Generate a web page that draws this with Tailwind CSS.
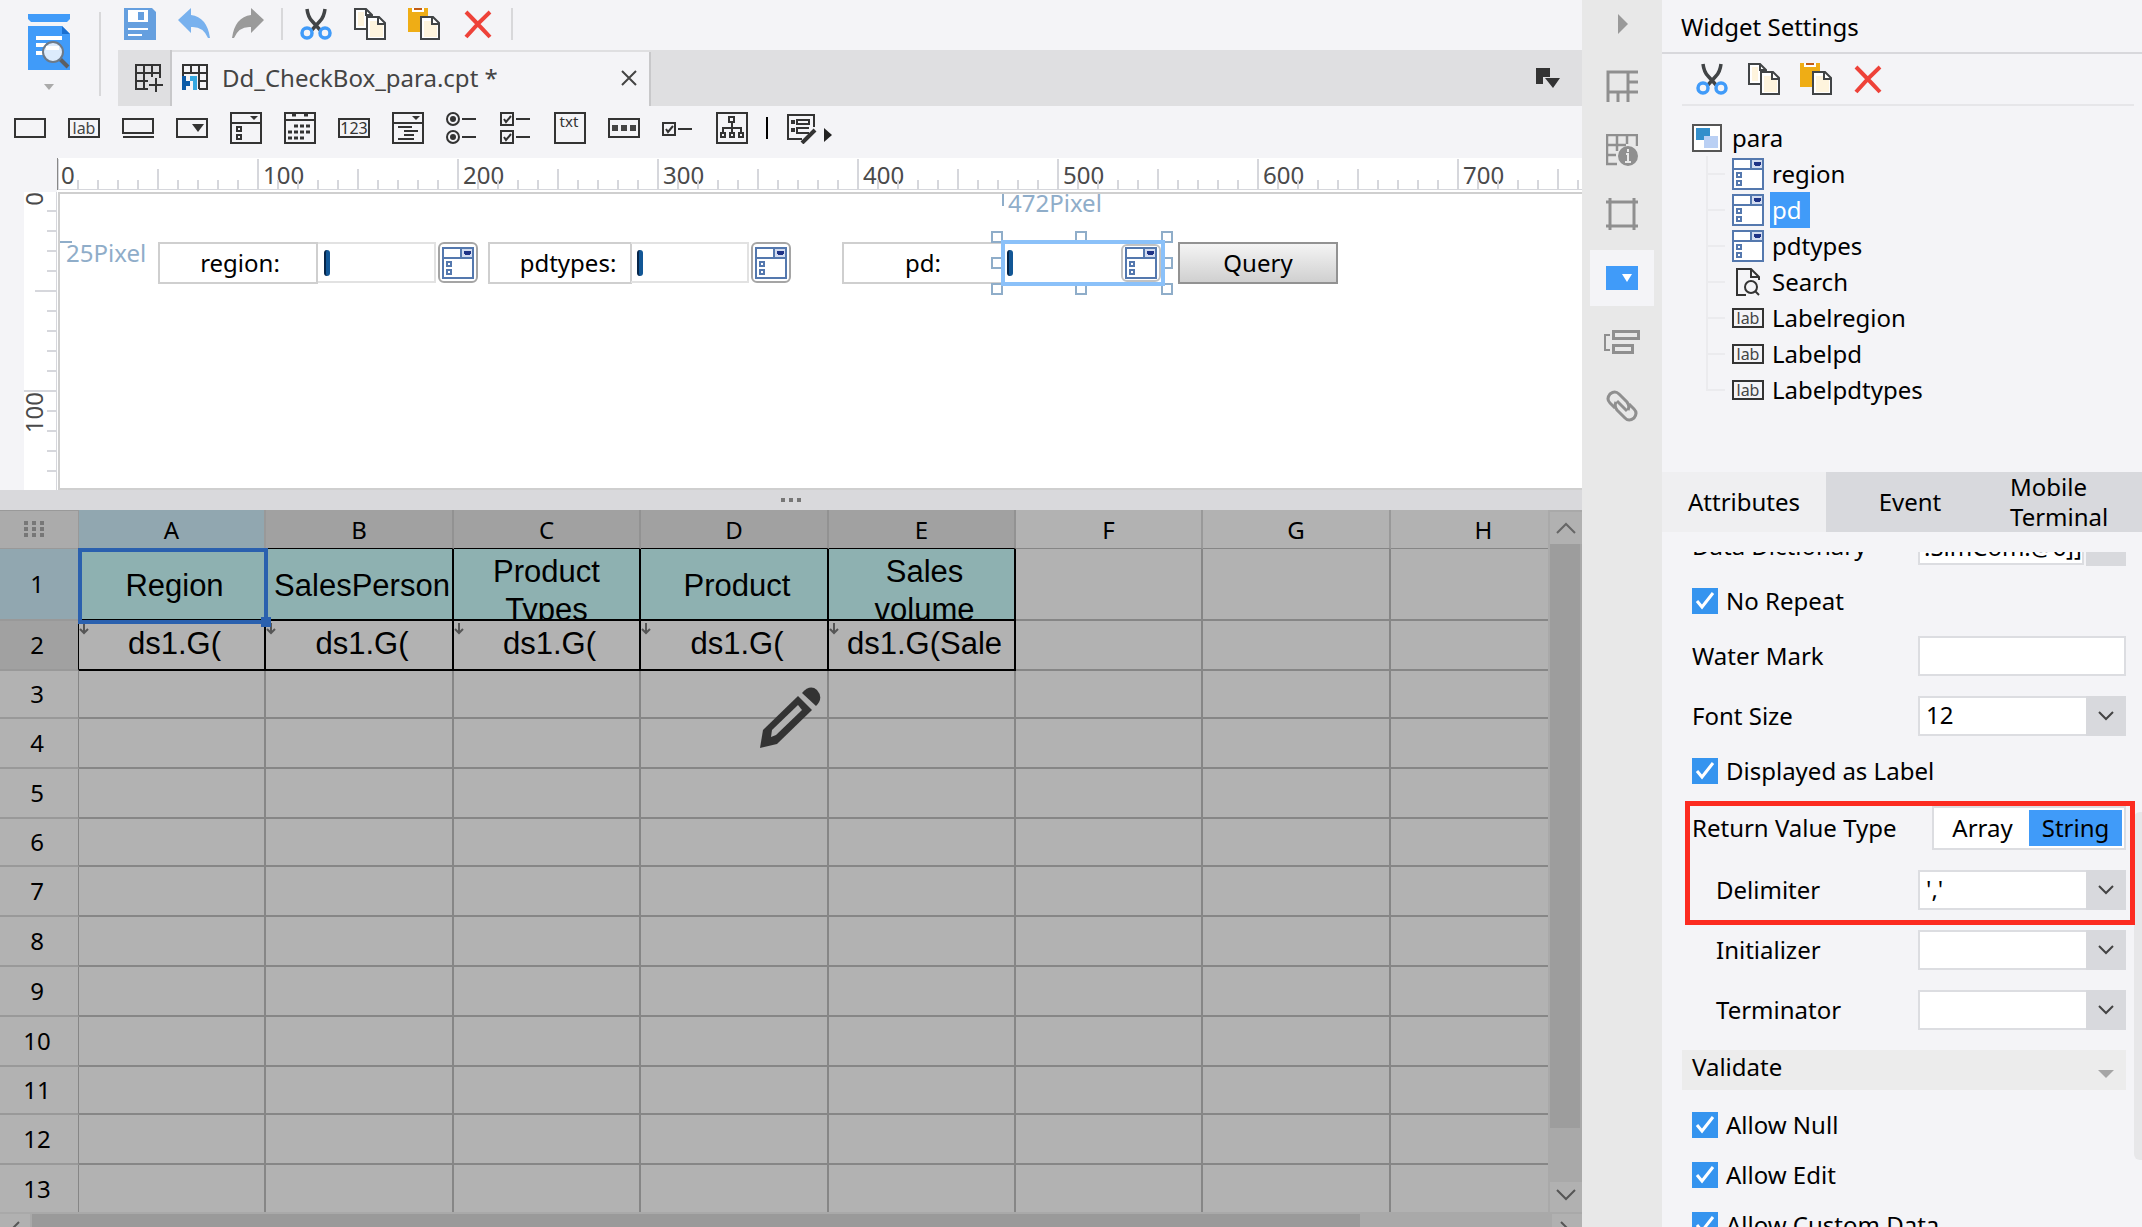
<!DOCTYPE html>
<html lang="en">
<head>
  <meta charset="UTF-8" />
  <meta name="viewport" content="width=device-width, initial-scale=1.0" />
  <title>Dd_CheckBox_para.cpt - Report Designer</title>
  <script src="https://cdn.jsdelivr.net/npm/@tailwindcss/browser@4"></script>
</head>
<body class="flex h-screen overflow-hidden bg-[#f4f4f7] text-black text-[24px] leading-[30px] font-['Noto_Sans','Open_Sans',sans-serif]">

  <!-- Shared icons -->
  <svg class="hidden">
    <symbol id="i-cut" viewBox="0 0 32 32">
      <path d="M7 1q1 8 5 12l9 10M25 1q-1 8-5 12l-9 10" fill="none" stroke="#414446" stroke-width="3.5" />
      <circle cx="7" cy="25" r="5" fill="none" stroke="#409bf9" stroke-width="3.5" />
      <circle cx="25" cy="25" r="5" fill="none" stroke="#409bf9" stroke-width="3.5" />
    </symbol>
    <symbol id="i-copy" viewBox="0 0 32 32">
      <path d="M1 1h11l6 6v14H1z" fill="#fff" stroke="#414446" stroke-width="2" />
      <path d="M4 4h6v14H4z" fill="#fef4dd" />
      <path d="M12 1v6h6" fill="none" stroke="#414446" stroke-width="2" />
      <path d="M13 9h12l6 6v16H13z" fill="#fff" stroke="#414446" stroke-width="2" />
      <path d="M16 13h8v4h5v12H16z" fill="#fef4dd" />
      <path d="M24 9v7h7" fill="none" stroke="#414446" stroke-width="2" />
    </symbol>
    <symbol id="i-paste" viewBox="0 0 32 32">
      <path d="M0 0h20v24H0z" fill="#efad15" />
      <path d="M4 0h12v4H4z" fill="#fff" />
      <path d="M6 0h8v2H6z" fill="#c15b14" />
      <path d="M13 9h12l6 6v16H13z" fill="#fff" stroke="#414446" stroke-width="2" />
      <path d="M16 13h8v4h5v12H16z" fill="#fef4dd" />
      <path d="M24 9v7h7" fill="none" stroke="#414446" stroke-width="2" />
    </symbol>
    <symbol id="i-delete" viewBox="0 0 32 32">
      <path d="M4 4q8 8 24 25M28 4Q16 15 4 29" fill="none" stroke="#ee4239" stroke-width="4" />
    </symbol>
    <symbol id="i-combo" viewBox="0 0 32 32">
      <path d="M1 1h30v30H1z" fill="#fff" stroke="#5478ae" stroke-width="2" />
      <path d="M1 11h30M19 1v10" stroke="#5478ae" stroke-width="2" />
      <path d="M20 2h10v8H20z" fill="#d3dcf0" />
      <path d="M22 4h7v3h-1v1h-5V7h-1z" fill="#1f3386" />
      <path d="M5 15h4v4H5zM5 23h4v4H5z" fill="none" stroke="#5478ae" stroke-width="2" />
    </symbol>
    <symbol id="i-label" viewBox="0 0 32 20">
      <path d="M1 1h30v18H1z" fill="none" stroke="#333" stroke-width="2" />
      <text x="16" y="16" text-anchor="middle" font-family="Noto Sans, sans-serif" font-size="16" fill="#444">lab</text>
    </symbol>
  </svg>

  <!-- Designer -->
  <main class="flex flex-col flex-1 min-w-0">

    <header class="flex h-[106px] shrink-0">
      <!-- Preview button -->
      <div class="flex w-[118px] shrink-0">
        <button type="button" aria-label="Preview" class="flex flex-col items-center w-[72px] ml-[13px] pt-3.5">
          <svg class="w-[42px] h-14" viewBox="0 0 42 56">
            <path d="M0 0h42v5l-3 3H3L0 5z" fill="#409bf9" />
            <path d="M0 12h34l8 8v36H0z" fill="#409bf9" />
            <path d="M34 12l8 8h-8z" fill="#1a6fd0" />
            <path d="M8 24h26M8 31h10M8 39h10" stroke="#fff" stroke-width="4" />
            <path d="M32 45l8 8" stroke="#5c5f63" stroke-width="4" />
            <circle cx="25" cy="38" r="10" fill="#dcebfc" stroke="#6d7a88" stroke-width="2" />
            <path d="M18 34h13" stroke="#fff" stroke-width="4" />
          </svg>
          <svg class="w-2.5 h-1.5 mt-3.5" viewBox="0 0 10 6"><path d="M0 0h10L5 6z" fill="#aaa" /></svg>
        </button>
        <div class="w-0.5 h-[84px] mt-3 ml-3.5 bg-[#d8d8da]"></div>
      </div>

      <div class="flex flex-col flex-1 min-w-0">
        <!-- Edit toolbar -->
        <div class="flex items-center h-[50px] pl-1.5 pb-0.5">
          <div class="flex gap-[22px]">
            <button type="button" aria-label="Save"><svg class="w-8 h-8" viewBox="0 0 32 32">
              <path d="M0 0h28l4 4v28H0z" fill="#659fdf" />
              <path d="M4 2h20v12H4z" fill="#fff" />
              <path d="M14 4h6v8h-6z" fill="#659fdf" />
              <path d="M4 21h20M4 27h14" stroke="#fff" stroke-width="2" />
            </svg></button>
            <button type="button" aria-label="Undo"><svg class="w-8 h-8" viewBox="0 0 32 32"><path d="M0 12L13 0v7q16 2 19 23h-2q-5-12-17-11v6z" fill="#78b1ee" /></svg></button>
            <button type="button" aria-label="Redo"><svg class="w-8 h-8" viewBox="0 0 32 32"><path d="M32 12L19 0v7Q3 9 0 30h2q5-12 17-11v6z" fill="#9a9a9a" /></svg></button>
          </div>
          <div class="w-0.5 h-8 mx-[17px] bg-[#d8d8da]"></div>
          <div class="flex gap-[22px]">
            <button type="button" aria-label="Cut"><svg class="w-8 h-8"><use href="#i-cut" /></svg></button>
            <button type="button" aria-label="Copy"><svg class="w-8 h-8"><use href="#i-copy" /></svg></button>
            <button type="button" aria-label="Paste"><svg class="w-8 h-8"><use href="#i-paste" /></svg></button>
            <button type="button" aria-label="Delete"><svg class="w-8 h-8"><use href="#i-delete" /></svg></button>
          </div>
          <div class="w-0.5 h-8 mx-[17px] bg-[#d8d8da]"></div>
        </div>

        <!-- File tabs -->
        <div class="flex h-14 bg-[#dfdfe1]">
          <button type="button" aria-label="New template" class="flex items-center justify-center w-[54px] pl-2.5 border-r-2 border-[#c8c8ca]">
            <svg class="w-7 h-7" viewBox="0 0 28 28" fill="none" stroke="#333" stroke-width="2">
              <path d="M13 25H1V1h24v13M1 9h24M1 17h12M9 1v24M17 1v12M14 21h14M21 14v14" />
            </svg>
          </button>
          <div class="flex items-center w-[479px] pl-2.5 pr-2 pb-0.5 mt-0.5 bg-[#f4f4f7] border-r-2 border-[#c8c8ca]">
            <svg class="w-7 h-7" viewBox="0 0 28 28">
              <path d="M1 12V1h24v24h-8M1 9h24M9 1v8M17 1v24M17 17h8" fill="none" stroke="#333" stroke-width="2" />
              <path d="M0 12h4v5h4v5H4v4H0z" fill="#0a5aa8" />
              <path d="M8 12h7v14h-4v-9H8z" fill="#35a8e0" />
            </svg>
            <span class="flex-1 ml-3 whitespace-nowrap text-[#444]">Dd_CheckBox_para.cpt *</span>
            <button type="button" aria-label="Close tab" class="p-1"><svg class="w-4 h-4" viewBox="0 0 16 16"><path d="M1 1l14 14M15 1L1 15" stroke="#444" stroke-width="2" /></svg></button>
          </div>
          <button type="button" aria-label="Tab list" class="ml-auto mr-[22px]">
            <svg class="w-6 h-5" viewBox="0 0 24 20" fill="#333"><path d="M0 0h14v9H7v7H0zM9 10h15l-7 10z" /></svg>
          </button>
        </div>
      </div>
    </header>

    <!-- Widget toolbar -->
    <div class="flex items-center gap-[22px] h-[52px] shrink-0 pl-3.5 pb-2">
      <button type="button" aria-label="Text"><svg class="w-8 h-8" viewBox="0 0 32 32" fill="none" stroke="#333" stroke-width="2"><path d="M1 7h30v18H1z" /></svg></button>
      <button type="button" aria-label="Label" class="h-8"><svg class="w-8 h-5"><use href="#i-label" /></svg></button>
      <button type="button" aria-label="Button"><svg class="w-8 h-8" viewBox="0 0 32 32" fill="none" stroke="#333" stroke-width="2"><path d="M1 7h30v14H1zM1 25h31" /></svg></button>
      <button type="button" aria-label="Drop-down box"><svg class="w-8 h-8" viewBox="0 0 32 32"><path d="M1 7h30v18H1z" fill="none" stroke="#333" stroke-width="2" /><path d="M16 12h12l-6 8z" fill="#333" /></svg></button>
      <button type="button" aria-label="Drop-down checkbox"><svg class="w-8 h-8" viewBox="0 0 32 32"><path d="M1 1h30v30H1zM1 11h30M7 15h4v4H7zM7 23h4v4H7z" fill="none" stroke="#333" stroke-width="2" /><path d="M20 4h8l-4 4z" fill="#333" /></svg></button>
      <button type="button" aria-label="Date"><svg class="w-8 h-8" viewBox="0 0 32 32"><path d="M1 1h30v30H1zM1 8h30" fill="none" stroke="#333" stroke-width="2" /><path d="M8 3h4M20 3h4" stroke="#333" stroke-width="3" /><path d="M10 14h17M4 20h23M4 26h17" fill="none" stroke="#333" stroke-width="3" stroke-dasharray="4 2" /></svg></button>
      <button type="button" aria-label="Number"><svg class="w-8 h-8" viewBox="0 0 32 32"><path d="M1 7h30v18H1z" fill="none" stroke="#333" stroke-width="2" /><text x="16" y="22" text-anchor="middle" font-family="Noto Sans, sans-serif" font-size="16" fill="#333">123</text></svg></button>
      <button type="button" aria-label="Drop-down tree"><svg class="w-8 h-8" viewBox="0 0 32 32"><path d="M1 1h30v30H1zM1 11h30M6 15h14M12 19h14M12 23h10M6 27h16" fill="none" stroke="#333" stroke-width="2" /><path d="M20 4h8l-4 4z" fill="#333" /></svg></button>
      <button type="button" aria-label="Radio group"><svg class="w-8 h-8" viewBox="0 0 32 32"><g fill="none" stroke="#333" stroke-width="2"><circle cx="7" cy="7" r="6" /><circle cx="7" cy="25" r="6" /><path d="M16 7h14M16 25h14" /></g><circle cx="7" cy="7" r="3" fill="#333" /><circle cx="7" cy="25" r="3" fill="#333" /></svg></button>
      <button type="button" aria-label="Checkbox group"><svg class="w-8 h-8" viewBox="0 0 32 32" fill="none" stroke="#333" stroke-width="2"><path d="M1 1h12v12H1zM1 19h12v12H1zM16 7h14M16 25h14M4 7l2 3 5-6M4 25l2 3 5-6" /></svg></button>
      <button type="button" aria-label="Text area"><svg class="w-8 h-8" viewBox="0 0 32 32"><path d="M1 1h30v30H1z" fill="none" stroke="#333" stroke-width="2" /><text x="15" y="15" text-anchor="middle" font-family="Noto Sans, sans-serif" font-size="15" fill="#333">txt</text></svg></button>
      <button type="button" aria-label="Password"><svg class="w-8 h-8" viewBox="0 0 32 32"><path d="M1 7h30v18H1z" fill="none" stroke="#333" stroke-width="2" /><path d="M4 16h24" stroke="#444" stroke-width="6" stroke-dasharray="6 3" /></svg></button>
      <button type="button" aria-label="Checkbox"><svg class="w-8 h-8" viewBox="0 0 32 32" fill="none" stroke="#333" stroke-width="2"><path d="M1 11h12v12H1zM16 17h14M4 17l2 3 5-6" /></svg></button>
      <button type="button" aria-label="View tree"><svg class="w-8 h-8" viewBox="0 0 32 32" fill="none" stroke="#333" stroke-width="2"><path d="M1 1h30v30H1zM13 5h5v5h-5zM5 21h4v4H5zM14 21h4v4h-4zM23 21h4v4h-4zM16 10v11M7 21v-5h18v5" /></svg></button>
      <div class="w-0.5 h-[22px] -mx-1 bg-black"></div>
      <button type="button" aria-label="Custom widgets" class="flex items-center gap-1.5">
        <svg class="w-8 h-8" viewBox="0 0 32 32" fill="none" stroke="#333" stroke-width="2"><path d="M28 15V3H2v24h14M11 8h12v4H11zM23 16H11v5h12" /><path d="M5 10h4M5 18h4" stroke-width="4" /><path d="M29 18L16 31" stroke-width="4" /></svg>
        <svg class="w-2 h-3.5 mt-3.5" viewBox="0 0 8 14"><path d="M0 0l8 7-8 7z" fill="#222" /></svg>
      </button>
    </div>

    <!-- Parameter pane -->
    <section class="flex flex-col h-[332px] shrink-0">
      <!-- Horizontal ruler -->
      <div class="relative flex h-[34px] leading-[34px] shrink-0 ml-[57px] bg-white overflow-hidden text-[#4a4a4a]">
        <span class="w-[200px] shrink-0 pl-1">0</span>
        <span class="w-[200px] shrink-0 pl-1.5">100</span>
        <span class="w-[200px] shrink-0 pl-1.5">200</span>
        <span class="w-[200px] shrink-0 pl-1.5">300</span>
        <span class="w-[200px] shrink-0 pl-1.5">400</span>
        <span class="w-[200px] shrink-0 pl-1.5">500</span>
        <span class="w-[200px] shrink-0 pl-1.5">600</span>
        <span class="flex-1 pl-1.5">700</span>
        <svg class="absolute inset-0 w-full h-full">
          <pattern id="h-minor" width="20" height="34" patternUnits="userSpaceOnUse"><path d="M0 22h2v10H0z" fill="#d6d7dc" /></pattern>
          <pattern id="h-major" width="200" height="34" patternUnits="userSpaceOnUse"><path d="M0 1h2v31H0zM100 11h2v21h-2z" fill="#d6d7dc" /></pattern>
          <rect width="100%" height="34" fill="url(#h-minor)" />
          <rect width="100%" height="34" fill="url(#h-major)" />
          <rect y="31" width="100%" height="1" fill="#d6d7dc" />
          <rect width="1" height="32" fill="#888" />
        </svg>
      </div>

      <div class="flex flex-1 min-h-0">
        <!-- Vertical ruler -->
        <div class="relative w-[34px] ml-6 shrink-0 bg-white text-[#4a4a4a]">
          <span class="absolute -left-0.5 top-0 w-6 leading-6 rotate-180 [writing-mode:vertical-rl]">0</span>
          <span class="absolute -left-0.5 top-[200px] w-6 leading-6 rotate-180 [writing-mode:vertical-rl]">100</span>
          <svg class="absolute inset-0 w-full h-full">
            <pattern id="v-minor" y="-2" width="34" height="20" patternUnits="userSpaceOnUse"><path d="M23 0h10v2H23z" fill="#d6d7dc" /></pattern>
            <pattern id="v-major" y="-2" width="34" height="200" patternUnits="userSpaceOnUse"><path d="M0 0h33v2H0zM11 100h22v2H11z" fill="#d6d7dc" /></pattern>
            <rect width="34" height="100%" fill="url(#v-minor)" />
            <rect width="34" height="100%" fill="url(#v-major)" />
            <rect x="32" width="1" height="100%" fill="#d6d7dc" />
          </svg>
        </div>

        <!-- Free-form widget canvas -->
        <div class="relative flex-1 bg-white border-2 border-r-0 border-[#cfcfcf] text-center">
          <span class="absolute left-0 top-[47px] w-3 h-0.5 bg-[#8fadc9]"></span>
          <span class="absolute left-1.5 top-11 text-[#8fadc9]">25Pixel</span>
          <span class="absolute left-[942px] top-0 w-0.5 h-3 bg-[#8fadc9]"></span>
          <span class="absolute left-[948px] -top-1.5 text-[#8fadc9]">472Pixel</span>

          <label for="w-region" class="absolute left-[98px] top-12 w-[160px] h-[42px] pl-1 leading-[38px] border-2 border-[#cfcfcf]">region:</label>
          <div class="absolute left-[258px] top-12 flex gap-0.5 h-[42px] pb-px">
            <input id="w-region" type="text" class="w-[118px] border-2 border-l-0 border-[#e2e2e2]" />
            <button type="button" aria-label="Choose region" class="flex items-center justify-center w-10 border-2 border-[#a5a5a5] rounded-md"><svg class="w-8 h-8"><use href="#i-combo" /></svg></button>
            <span class="absolute left-1.5 top-2 w-[6px] h-[26px] rounded-sm border-l-2 border-[#06264a] bg-[#125796]"></span>
          </div>

          <label for="w-pdtypes" class="absolute left-[428px] top-12 w-[144px] h-[42px] pl-4 leading-[38px] border-2 border-[#cfcfcf]">pdtypes:</label>
          <div class="absolute left-[571px] top-12 flex gap-0.5 h-[42px] pb-px">
            <input id="w-pdtypes" type="text" class="w-[118px] border-2 border-l-0 border-[#e2e2e2]" />
            <button type="button" aria-label="Choose pdtypes" class="flex items-center justify-center w-10 border-2 border-[#a5a5a5] rounded-md"><svg class="w-8 h-8"><use href="#i-combo" /></svg></button>
            <span class="absolute left-1.5 top-2 w-[6px] h-[26px] rounded-sm border-l-2 border-[#06264a] bg-[#125796]"></span>
          </div>

          <label for="w-pd" class="absolute left-[782px] top-12 w-[162px] h-[42px] leading-[38px] border-2 border-[#cfcfcf]">pd:</label>
          <!-- Selected widget with its resize handles -->
          <svg class="absolute left-[930px] top-[37px] w-[184px] h-16" viewBox="0 0 184 64" fill="#fff" stroke="#8fadc9" stroke-width="2">
            <path d="M2 1h10v10H2zM86 1h10v10H86zM172 1h10v10h-10zM2 27h10v10H2zM172 27h10v10h-10zM2 53h10v10H2zM86 53h10v10H86zM172 53h10v10h-10z" />
          </svg>
          <div class="absolute left-[941px] top-[46px] flex w-[164px] h-[46px] border-4 border-[#8bc1f9] bg-white">
            <input id="w-pd" type="text" class="flex-1 min-w-0" />
            <button type="button" aria-label="Choose pd" class="flex items-center justify-center w-10 border-2 border-[#c2c2c2] rounded-md"><svg class="w-8 h-8"><use href="#i-combo" /></svg></button>
            <span class="absolute left-0.5 top-1.5 w-[6px] h-[26px] rounded-sm border-l-2 border-[#06264a] bg-[#125796]"></span>
          </div>

          <button type="button" class="absolute left-[1118px] top-12 w-[160px] h-[42px] border-2 border-[#929292] bg-linear-to-b from-[#f4f4f4] to-[#d0d0d0]">Query</button>
        </div>
      </div>
    </section>

    <!-- Splitter -->
    <div class="flex items-center justify-center gap-1 h-5 shrink-0 bg-[#d9d9dc]">
      <span class="w-1 h-1 bg-[#777]"></span>
      <span class="w-1 h-1 bg-[#777]"></span>
      <span class="w-1 h-1 bg-[#777]"></span>
    </div>

    <!-- Report sheet -->
    <section class="relative flex flex-1 min-h-0 bg-[#b2b2b2]">
      <div class="relative flex-1 min-w-0 overflow-hidden">
        <table class="w-full table-fixed border-separate border-spacing-0 text-center">
          <colgroup>
            <col class="w-[79px]" />
            <col class="w-[187px]" /><col class="w-[188px]" /><col class="w-[187px]" /><col class="w-[188px]" /><col class="w-[187px]" /><col class="w-[187px]" /><col class="w-[188px]" />
            <col />
          </colgroup>
          <thead>
            <tr class="h-[39px]">
              <th class="border-b border-r border-t border-[#999] bg-[#ababab]">
                <svg class="w-5 h-[18px] ml-6" viewBox="0 0 20 18"><path d="M0 2h20M0 8h20M0 14h20" stroke="#777" stroke-width="4" stroke-dasharray="4 4" /></svg>
              </th>
              <th scope="col" class="font-normal bg-[#91a7b0] border-r-2 border-r-[#999] border-b border-b-black pt-0.5">A</th>
              <th scope="col" class="font-normal bg-[#a1a1a1] border-r-2 border-r-[#929292] border-b border-b-black pt-0.5">B</th>
              <th scope="col" class="font-normal bg-[#a1a1a1] border-r-2 border-r-[#929292] border-b border-b-black pt-0.5">C</th>
              <th scope="col" class="font-normal bg-[#a1a1a1] border-r-2 border-r-[#929292] border-b border-b-black pt-0.5">D</th>
              <th scope="col" class="font-normal bg-[#a1a1a1] border-r-2 border-r-[#929292] border-b border-b-black pt-0.5">E</th>
              <th scope="col" class="font-normal border-r-2 border-r-[#999] border-b border-b-[#868686] pt-0.5">F</th>
              <th scope="col" class="font-normal border-r-2 border-r-[#999] border-b border-b-[#868686] pt-0.5">G</th>
              <th scope="col" class="font-normal border-b border-b-[#868686] pl-7 pt-0.5">H</th>
            </tr>
          </thead>
          <tbody id="sheet">
            <tr class="h-[72px] text-[31px] leading-[38px] font-['Liberation_Sans',Arial,sans-serif]">
              <th scope="row" class="text-[24px] font-normal font-['Noto_Sans',sans-serif] bg-[#91a7b0] border-b-2 border-b-[#999] border-r border-r-black pr-1">1</th>
              <td class="bg-[#8eb1b1] border-r-2 border-b-2 border-black pl-1.5 pt-1">Region</td>
              <td class="bg-[#8eb1b1] border-r-2 border-b-2 border-black pl-1.5 pt-1">SalesPerson</td>
              <td class="bg-[#8eb1b1] border-r-2 border-b-2 border-black"><div class="h-[70px] pt-1 overflow-hidden">Product<br />Types</div></td>
              <td class="bg-[#8eb1b1] border-r-2 border-b-2 border-black pl-1.5 pt-1">Product</td>
              <td class="bg-[#8eb1b1] border-r-2 border-b-2 border-black pl-1.5"><div class="h-[70px] pt-1 overflow-hidden">Sales<br />volume</div></td>
              <td class="border-r-2 border-b-2 border-[#868686]"></td>
              <td class="border-r-2 border-b-2 border-[#868686]"></td>
              <td class="border-b-2 border-[#868686]"></td>
            </tr>
            <tr class="h-[50px] text-[31px] leading-[38px] font-['Liberation_Sans',Arial,sans-serif]">
              <th scope="row" class="text-[24px] font-normal font-['Noto_Sans',sans-serif] bg-[#a1a1a1] border-b-2 border-b-[#999] border-r border-r-black pr-1">2</th>
              <td class="relative border-r-2 border-b-2 border-black pl-1.5 pb-0.5">ds1.G(<svg class="absolute left-0 top-0.5 w-2.5 h-3" viewBox="0 0 10 12"><path d="M5 0v10M1 6l4 4 4-4" fill="none" stroke="#555" stroke-width="2" /></svg></td>
              <td class="relative border-r-2 border-b-2 border-black pl-1.5 pb-0.5">ds1.G(<svg class="absolute left-0 top-0.5 w-2.5 h-3" viewBox="0 0 10 12"><path d="M5 0v10M1 6l4 4 4-4" fill="none" stroke="#555" stroke-width="2" /></svg></td>
              <td class="relative border-r-2 border-b-2 border-black pl-1.5 pb-0.5">ds1.G(<svg class="absolute left-0 top-0.5 w-2.5 h-3" viewBox="0 0 10 12"><path d="M5 0v10M1 6l4 4 4-4" fill="none" stroke="#555" stroke-width="2" /></svg></td>
              <td class="relative border-r-2 border-b-2 border-black pl-1.5 pb-0.5">ds1.G(<svg class="absolute left-0 top-0.5 w-2.5 h-3" viewBox="0 0 10 12"><path d="M5 0v10M1 6l4 4 4-4" fill="none" stroke="#555" stroke-width="2" /></svg></td>
              <td class="relative border-r-2 border-b-2 border-black pl-1.5 pb-0.5">ds1.G(Sale<svg class="absolute left-0 top-0.5 w-2.5 h-3" viewBox="0 0 10 12"><path d="M5 0v10M1 6l4 4 4-4" fill="none" stroke="#555" stroke-width="2" /></svg></td>
              <td class="border-r-2 border-b-2 border-[#868686]"></td>
              <td class="border-r-2 border-b-2 border-[#868686]"></td>
              <td class="border-b-2 border-[#868686]"></td>
            </tr>
          </tbody>
        </table>

        <!-- Cell selection -->
        <div class="absolute left-[78px] top-[38px] w-[190px] h-[76px] border-4 border-[#2a60ae]"></div>
        <div class="absolute left-[261px] top-[107px] w-2.5 h-2.5 bg-[#2a60ae]"></div>

        <!-- Edit pencil -->
        <svg class="absolute left-[760px] top-[177px] w-[61px] h-[62px]" viewBox="0 0 61 62">
          <path d="M0 61l3-18L38 9l14 14-35 34z" fill="#333" />
          <path d="M12 43l26-25 4 5-26 25-5 2z" fill="#b2b2b2" />
          <path d="M42 6q8-9 15-3 7 8-1 16z" fill="#333" />
        </svg>
      </div>

      <!-- Vertical scrollbar -->
      <div class="flex flex-col w-[34px] shrink-0 pl-0.5 pb-[15px] bg-[#a9a9a9]">
        <button type="button" aria-label="Scroll up" class="flex items-center justify-center h-8 mt-0.5 bg-[#b1b1b1]"><svg class="w-5 h-3" viewBox="0 0 20 12"><path d="M1 11l9-9 9 9" fill="none" stroke="#666" stroke-width="2" /></svg></button>
        <div class="flex-1 w-[30px] bg-[#9d9d9d]"></div>
        <button type="button" aria-label="Scroll down" class="flex items-center justify-center h-[30px] mt-[54px] pb-1 bg-[#b1b1b1]"><svg class="w-5 h-3" viewBox="0 0 20 12"><path d="M1 1l9 9 9-9" fill="none" stroke="#555" stroke-width="2" /></svg></button>
      </div>

      <!-- Horizontal scrollbar, cut by the window edge -->
      <div class="absolute inset-x-0 bottom-0 flex gap-0.5 h-[15px] pt-0.5 bg-[#a9a9a9] overflow-hidden">
        <button type="button" aria-label="Scroll left" class="w-[30px] h-[30px] bg-[#b1b1b1]"><svg class="w-3 h-5 ml-2 mt-1" viewBox="0 0 12 20"><path d="M11 1l-9 9 9 9" fill="none" stroke="#555" stroke-width="2" /></svg></button>
        <div class="flex-1 bg-[#9a9a9a]"></div>
        <button type="button" aria-label="Scroll right" class="w-[30px] h-[30px] ml-[190px] bg-[#b1b1b1]"><svg class="w-3 h-5 ml-2 mt-1" viewBox="0 0 12 20"><path d="M1 1l9 9-9 9" fill="none" stroke="#555" stroke-width="2" /></svg></button>
      </div>
    </section>
  </main>

  <!-- Side rail -->
  <nav class="flex flex-col items-center w-20 shrink-0 bg-[#e8e8e8]">
    <button type="button" aria-label="Collapse panel" class="flex items-center justify-center h-[54px] w-16 pb-1.5 pl-0.5"><svg class="w-2.5 h-5" viewBox="0 0 10 20"><path d="M0 0l10 10L0 20z" fill="#999" /></svg></button>
    <button type="button" aria-label="Cell element" class="flex items-center justify-center h-16 w-16"><svg class="w-8 h-8" viewBox="0 0 32 32" fill="none" stroke="#8f8f8f" stroke-width="3"><path d="M2 32V2h30M2 22h30M22 2v30M22 12h10M12 22v10" /></svg></button>
    <button type="button" aria-label="Cell attributes" class="flex items-center justify-center h-16 w-16"><svg class="w-8 h-8" viewBox="0 0 32 32"><path d="M31 12V1H1v29h10M1 11h19M1 21h9M11 1v16M21 1v9" fill="none" stroke="#8f8f8f" stroke-width="2.5" /><circle cx="22" cy="22" r="10" fill="#8f8f8f" /><path d="M22 15v3M22 20v8M20 20h3M19 28h6" stroke="#e8e8e8" stroke-width="2" /></svg></button>
    <button type="button" aria-label="Floating element" class="flex items-center justify-center h-16 w-16"><svg class="w-8 h-8" viewBox="0 0 32 32" fill="none" stroke="#8f8f8f" stroke-width="3"><path d="M4 0v32M28 0v32M0 4h32M0 28h32" /></svg></button>
    <button type="button" aria-label="Widget settings" class="flex items-center justify-center h-14 w-16 my-1 bg-[#f4f4f7]"><svg class="w-8 h-6" viewBox="0 0 32 24"><path d="M0 0h32v24H0z" fill="#409bf9" /><path d="M16 8h10l-5 8z" fill="#fff" /></svg></button>
    <button type="button" aria-label="Conditions" class="flex items-center justify-center h-16 w-16"><svg class="w-9 h-6" viewBox="0 0 36 24" fill="none" stroke="#8f8f8f"><path d="M9.500 1.500h25v7h-25zM9.500 15.500h19v7h-19z" stroke-width="3" /><path d="M6 5H1v15h5" stroke-width="2" /></svg></button>
    <button type="button" aria-label="Hyperlink" class="flex items-center justify-center h-16 w-16"><svg class="w-8 h-8" viewBox="0 0 32 32" fill="none" stroke="#8f8f8f" stroke-width="3"><path d="M9 18l-5-5q-4-4 0-9 5-4 9 0l8 8q3 4 1 8M23 14l5 5q4 4 0 9-5 4-9 0l-8-8q-3-4-1-8M11 11l10 10" /></svg></button>
  </nav>

  <!-- Widget Settings panel -->
  <aside class="relative flex flex-col w-[480px] shrink-0">
    <h1 class="h-[54px] shrink-0 pl-[19px] pt-3 border-b-2 border-[#d8d8dc]">Widget Settings</h1>

    <div class="flex items-center gap-5 h-[52px] shrink-0 ml-5 mr-2 pl-3.5 border-b-2 border-[#e6e6e9]">
      <button type="button" aria-label="Cut widget"><svg class="w-8 h-8"><use href="#i-cut" /></svg></button>
      <button type="button" aria-label="Copy widget"><svg class="w-8 h-8"><use href="#i-copy" /></svg></button>
      <button type="button" aria-label="Paste widget"><svg class="w-8 h-8"><use href="#i-paste" /></svg></button>
      <button type="button" aria-label="Delete widget"><svg class="w-8 h-8"><use href="#i-delete" /></svg></button>
    </div>

    <!-- Widget tree -->
    <div class="h-[366px] shrink-0 pl-[30px] pt-3.5">
      <div class="flex items-center gap-2.5 h-9">
        <svg class="w-[30px] h-7" viewBox="0 0 30 28"><path d="M1 1h28v26H1z" fill="#fff" stroke="#555" stroke-width="2" /><path d="M4 4h14v12H4z" fill="#348fcb" /><path d="M12 12h14v12H12z" fill="#bad0f4" /></svg>
        <span>para</span>
      </div>
      <ul class="relative ml-3.5 pl-[26px]">
        <li class="absolute left-0 top-0" aria-hidden="true">
          <svg class="w-5 h-[236px]" viewBox="0 0 20 236"><path d="M1 0v235M1 18h18M1 54h18M1 90h18M1 126h18M1 162h18M1 198h18M1 234h18" fill="none" stroke="#ebebee" stroke-width="2" /></svg>
        </li>
        <li class="flex items-center gap-1.5 h-9"><svg class="w-8 h-8"><use href="#i-combo" /></svg><span class="px-0.5 leading-9">region</span></li>
        <li class="flex items-center gap-1.5 h-9"><svg class="w-8 h-8"><use href="#i-combo" /></svg><span class="pl-0.5 pr-2 leading-9 bg-[#409bf9] text-white">pd</span></li>
        <li class="flex items-center gap-1.5 h-9"><svg class="w-8 h-8"><use href="#i-combo" /></svg><span class="px-0.5 leading-9">pdtypes</span></li>
        <li class="flex items-center gap-1.5 h-9">
          <svg class="w-8 h-8" viewBox="0 0 32 32" fill="none" stroke="#333" stroke-width="2"><path d="M14 29H5V3h14l8 8v3M19 3v8h8" /><circle cx="19" cy="21" r="6" /><path d="M23 25l4 4" /></svg>
          <span class="px-0.5 leading-9">Search</span>
        </li>
        <li class="flex items-center gap-1.5 h-9"><svg class="w-8 h-5"><use href="#i-label" /></svg><span class="px-0.5 leading-9">Labelregion</span></li>
        <li class="flex items-center gap-1.5 h-9"><svg class="w-8 h-5"><use href="#i-label" /></svg><span class="px-0.5 leading-9">Labelpd</span></li>
        <li class="flex items-center gap-1.5 h-9"><svg class="w-8 h-5"><use href="#i-label" /></svg><span class="px-0.5 leading-9">Labelpdtypes</span></li>
      </ul>
    </div>

    <!-- Tabs -->
    <div class="flex h-[60px] shrink-0 bg-[#d8d9dd]">
      <button type="button" class="w-[164px] bg-[#efeff1]">Attributes</button>
      <button type="button" class="w-[168px]">Event</button>
      <button type="button" class="flex-1 pl-4 text-left">Mobile<br />Terminal</button>
    </div>

    <!-- Attributes -->
    <form class="flex-1 min-h-0 mt-5 pl-[30px] pr-4 overflow-hidden">
      <div class="flex items-center h-10 -mt-[26px]">
        <label for="dict" class="w-[226px]">Data Dictionary</label>
        <input id="dict" type="text" value=".SimCom.@6]]" class="flex-1 min-w-0 h-[38px] pl-1 bg-white border-2 border-[#dcdde1]" />
        <button type="button" aria-label="Edit dictionary" class="w-10 h-10 ml-0.5 bg-[#d8d9dd]"></button>
      </div>
      <label class="flex items-center gap-2 h-[70px]">
        <input type="checkbox" checked class="appearance-none w-[26px] h-[26px] bg-[#3594ef]" />
        <svg class="absolute w-[26px] h-[26px] pointer-events-none" viewBox="0 0 26 26"><path d="M5 13l5 6L21 5" fill="none" stroke="#fff" stroke-width="3" /></svg>
        No Repeat
      </label>
      <div class="flex items-center h-10">
        <label for="watermark" class="w-[226px]">Water Mark</label>
        <input id="watermark" type="text" class="flex-1 min-w-0 h-10 bg-white border-2 border-[#dcdde1]" />
      </div>
      <div class="flex items-center h-10 mt-5">
        <label for="fontsize" class="w-[226px]">Font Size</label>
        <div class="relative flex-1">
          <select id="fontsize" class="block appearance-none w-full h-10 pl-1.5 pb-0.5 bg-white border-2 border-[#dcdde1]"><option>12</option></select>
          <span class="absolute right-0 top-0 flex items-center justify-center w-10 h-10 bg-[#d8d9dd] pointer-events-none"><svg class="w-4 h-2.5" viewBox="0 0 16 10"><path d="M1 1l7 7 7-7" fill="none" stroke="#444" stroke-width="2" /></svg></span>
        </div>
      </div>
      <label class="flex items-center gap-2 h-[70px]">
        <input type="checkbox" checked class="appearance-none w-[26px] h-[26px] bg-[#3594ef]" />
        <svg class="absolute w-[26px] h-[26px] pointer-events-none" viewBox="0 0 26 26"><path d="M5 13l5 6L21 5" fill="none" stroke="#fff" stroke-width="3" /></svg>
        Displayed as Label
      </label>

      <!-- Return value settings, highlighted -->
      <div class="relative z-10">
        <div class="absolute -left-[7px] -right-[9px] -top-[5px] -bottom-[15px] border-[5px] border-[#fc2b20] pointer-events-none"></div>
        <div class="flex items-center justify-between h-11">
          <span class="whitespace-nowrap">Return Value Type</span>
          <div class="flex w-[194px] h-11 p-0.5 bg-white border-2 border-[#dcdde1]">
            <button type="button" class="w-1/2">Array</button>
            <button type="button" class="w-1/2 bg-[#409bf9]">String</button>
          </div>
        </div>
        <div class="flex items-center h-10 mt-5 pl-6">
          <label for="delimiter" class="w-[202px]">Delimiter</label>
          <div class="relative flex-1">
            <select id="delimiter" class="block appearance-none w-full h-10 pl-1.5 pb-0.5 bg-white border-2 border-[#dcdde1]"><option>','</option></select>
            <span class="absolute right-0 top-0 flex items-center justify-center w-10 h-10 bg-[#d8d9dd] pointer-events-none"><svg class="w-4 h-2.5" viewBox="0 0 16 10"><path d="M1 1l7 7 7-7" fill="none" stroke="#444" stroke-width="2" /></svg></span>
          </div>
        </div>
      </div>

      <div class="flex items-center h-10 mt-5 pl-6">
        <label for="initializer" class="w-[202px]">Initializer</label>
        <div class="relative flex-1">
          <select id="initializer" class="block appearance-none w-full h-10 bg-white border-2 border-[#dcdde1]"><option></option></select>
          <span class="absolute right-0 top-0 flex items-center justify-center w-10 h-10 bg-[#d8d9dd] pointer-events-none"><svg class="w-4 h-2.5" viewBox="0 0 16 10"><path d="M1 1l7 7 7-7" fill="none" stroke="#444" stroke-width="2" /></svg></span>
        </div>
      </div>
      <div class="flex items-center h-10 mt-5 pl-6">
        <label for="terminator" class="w-[202px]">Terminator</label>
        <div class="relative flex-1">
          <select id="terminator" class="block appearance-none w-full h-10 bg-white border-2 border-[#dcdde1]"><option></option></select>
          <span class="absolute right-0 top-0 flex items-center justify-center w-10 h-10 bg-[#d8d9dd] pointer-events-none"><svg class="w-4 h-2.5" viewBox="0 0 16 10"><path d="M1 1l7 7 7-7" fill="none" stroke="#444" stroke-width="2" /></svg></span>
        </div>
      </div>
      <button type="button" class="flex items-center justify-between w-[calc(100%+10px)] h-10 mt-5 mb-2.5 -ml-2.5 pl-2.5 pr-3 pb-1.5 bg-[#ececec]">
        Validate
        <svg class="w-4 h-2 mt-3.5" viewBox="0 0 16 8"><path d="M0 0h16L8 8z" fill="#a5a5a5" /></svg>
      </button>
      <label class="flex items-center gap-2 h-[50px]">
        <input type="checkbox" checked class="appearance-none w-[26px] h-[26px] bg-[#3594ef]" />
        <svg class="absolute w-[26px] h-[26px] pointer-events-none" viewBox="0 0 26 26"><path d="M5 13l5 6L21 5" fill="none" stroke="#fff" stroke-width="3" /></svg>
        Allow Null
      </label>
      <label class="flex items-center gap-2 h-[50px]">
        <input type="checkbox" checked class="appearance-none w-[26px] h-[26px] bg-[#3594ef]" />
        <svg class="absolute w-[26px] h-[26px] pointer-events-none" viewBox="0 0 26 26"><path d="M5 13l5 6L21 5" fill="none" stroke="#fff" stroke-width="3" /></svg>
        Allow Edit
      </label>
      <label class="flex items-center gap-2 h-[50px]">
        <input type="checkbox" checked class="appearance-none w-[26px] h-[26px] bg-[#3594ef]" />
        <svg class="absolute w-[26px] h-[26px] pointer-events-none" viewBox="0 0 26 26"><path d="M5 13l5 6L21 5" fill="none" stroke="#fff" stroke-width="3" /></svg>
        Allow Custom Data
      </label>
    </form>

    <!-- Panel scroll thumb -->
    <div class="absolute right-0 top-[812px] w-2 h-[348px] rounded-l-md bg-[#e7e7e9]"></div>
  </aside>

  <script>
    // Empty sheet rows below the two filled ones
    const rowHeights = [48, 50, 50, 48, 50, 50, 50, 50, 48, 50, 50];
    const sheet = document.getElementById("sheet");
    rowHeights.forEach((height, i) => {
      const row = document.createElement("tr");
      row.style.height = height + "px";
      row.innerHTML =
        '<th scope="row" class="font-normal border-b-2 border-b-[#999] border-r border-r-[#868686] pr-1">' + (i + 3) + "</th>" +
        '<td class="border-r-2 border-b-2 border-[#868686]"></td>'.repeat(7) +
        '<td class="border-b-2 border-[#868686]"></td>';
      sheet.appendChild(row);
    });
  </script>

</body>
</html>
